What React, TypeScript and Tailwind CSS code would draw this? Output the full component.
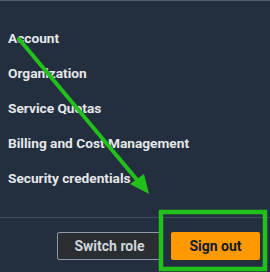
const items = [
  'Account',
  'Organization',
  'Service Quotas',
  'Billing and Cost Management',
  'Security credentials',
]

export default function App() {
  return (
    <div
      className="relative w-[270px] h-[272px] overflow-hidden bg-[#232f3e] border-t border-[#545b64]"
      style={{ fontFamily: 'Roboto, "Open Sans", Arial, sans-serif' }}
    >
      <ul className="pt-[20px]">
        {items.map((label) => (
          <li
            key={label}
            className="h-[35px] flex items-center pl-[8px] text-[13.7px] font-bold text-[#e4e7ea]"
          >
            {label}
          </li>
        ))}
      </ul>
      <div className="mt-[21px] border-t border-[#414d5c]" />
      <div className="flex justify-end gap-[9px] pt-[14px] pr-[10px]">
        <button className="w-[105px] h-[28px] border border-[#8d99a8] bg-[#2a2e33] text-[14px] font-bold text-[#d1d5db] rounded-[2px]">
          Switch role
        </button>
        <button className="w-[89px] h-[28px] bg-[#ff9900] text-[14px] font-bold text-[#0f1b2a] rounded-[2px]">
          Sign out
        </button>
      </div>

      {/* annotation overlay */}
      <svg
        className="absolute inset-0 pointer-events-none"
        width="270"
        height="272"
        viewBox="0 0 270 272"
      >
        <line x1="19" y1="38" x2="138" y2="180" stroke="#22c01a" strokeWidth="4" strokeLinecap="round" />
        <polygon points="149,193 130,183 144,173" fill="#22c01a" />
        <rect x="161" y="211" width="104" height="57" fill="none" stroke="#22c01a" strokeWidth="4.5" />
      </svg>
    </div>
  )
}
